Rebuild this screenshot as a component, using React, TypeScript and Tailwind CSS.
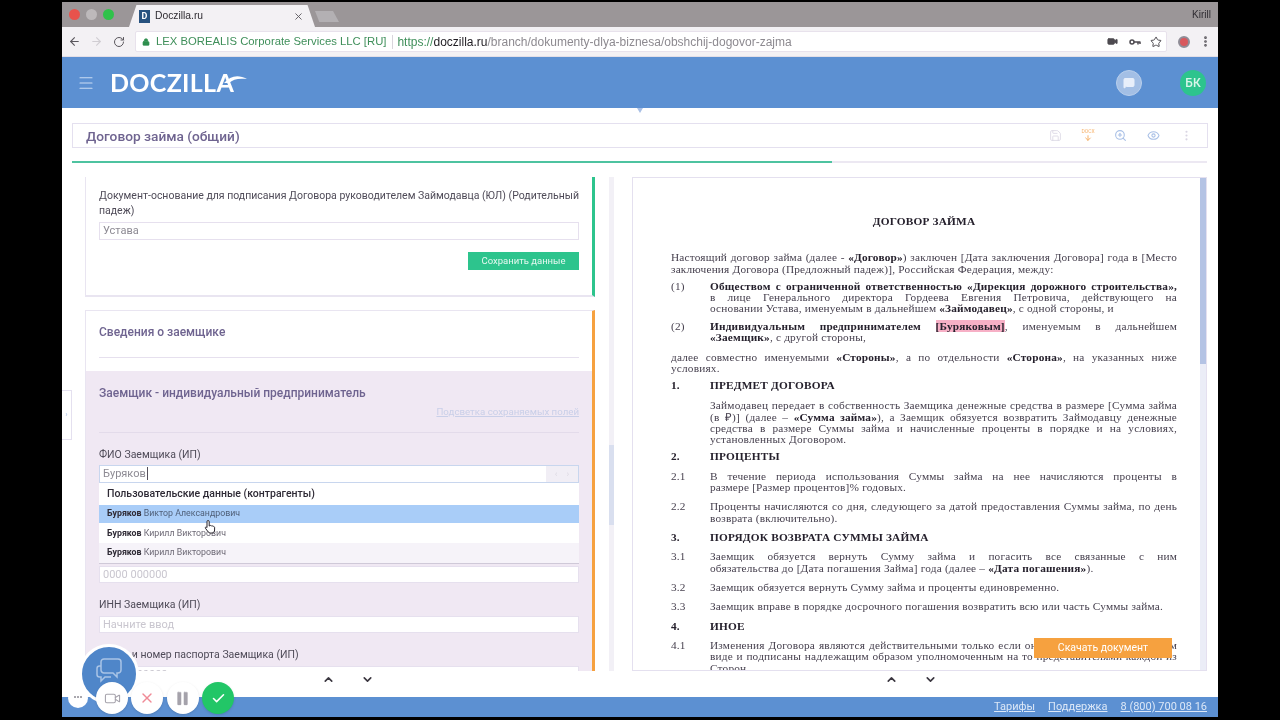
import type { ReactNode } from 'react';
import {
  ArrowDown,
  ArrowLeft,
  ArrowRight,
  Check,
  ChevronDown,
  ChevronUp,
  Eye,
  Lock,
  Menu,
  MessageSquare,
  MoreVertical,
  Pause,
  RotateCw,
  Save,
  Star,
  Video,
  X,
  ZoomIn,
} from 'lucide-react';

function Line({ children, just }: { children: ReactNode; just?: boolean }) {
  return <div className={just ? 'whitespace-nowrap [text-align-last:justify]' : 'whitespace-nowrap'}>{children}</div>;
}

function Clause({ num, children, top, bold }: { num: string; children: ReactNode; top: string; bold?: boolean }) {
  return (
    <div className={`flex ${top}`}>
      <div className={`w-[39px] shrink-0 ${bold ? 'font-bold text-[#25202c]' : ''}`}>{num}</div>
      <div className={`flex-1 min-w-0 ${bold ? 'font-bold text-[#25202c]' : ''}`}>{children}</div>
    </div>
  );
}

function B({ children }: { children: ReactNode }) {
  return <b className="font-bold text-[#25202c]">{children}</b>;
}

function Doc() {
  return (
    <div className="relative w-[575px] h-[494px] shrink-0 overflow-hidden bg-white border border-[#e4e0ef] flex">
      <div className="flex-1 min-w-0 pl-[38px] pr-[23px] pt-[38px] font-['Liberation_Serif',serif] text-[11.3px] tracking-[0.19px] leading-[11.35px] text-[#47414f]">
        <div className="text-center font-bold text-[#25202c]">ДОГОВОР ЗАЙМА</div>
        <div className="mt-[25px]">
          <Line just>
            Настоящий договор займа (далее - <B>«Договор»</B>) заключен [Дата заключения Договора] года в [Место
          </Line>
          <Line>заключения Договора (Предложный падеж)], Российская Федерация, между:</Line>
        </div>
        <Clause num="(1)" top="mt-[5.5px]">
          <Line just>
            <B>Обществом с ограниченной ответственностью «Дирекция дорожного строительства»,</B>
          </Line>
          <Line just>в лице Генерального директора Гордеева Евгения Петровича, действующего на</Line>
          <Line>
            основании Устава, именуемым в дальнейшем <B>«Займодавец»</B>, с одной стороны, и
          </Line>
        </Clause>
        <Clause num="(2)" top="mt-[6.5px]">
          <Line just>
            <B>Индивидуальным предпринимателем</B> <B><span className="bg-[#f7b0c6]">[Буряковым]</span></B>, именуемым в дальнейшем
          </Line>
          <Line>
            <B>«Заемщик»</B>, с другой стороны,
          </Line>
        </Clause>
        <div className="mt-[8px]">
          <Line just>
            далее совместно именуемыми <B>«Стороны»</B>, а по отдельности <B>«Сторона»</B>, на указанных ниже
          </Line>
          <Line>условиях.</Line>
        </div>
        <Clause num="1." top="mt-[5.5px]" bold>
          ПРЕДМЕТ ДОГОВОРА
        </Clause>
        <div className="pl-[39px] mt-[9px]">
          <Line just>Займодавец передает в собственность Заемщика денежные средства в размере [Сумма займа</Line>
          <Line just>
            (в ₽)] (далее – <B>«Сумма займа»</B>), а Заемщик обязуется возвратить Займодавцу денежные
          </Line>
          <Line just>средства в размере Суммы займа и начисленные проценты в порядке и на условиях,</Line>
          <Line>установленных Договором.</Line>
        </div>
        <Clause num="2." top="mt-[5.5px]" bold>
          ПРОЦЕНТЫ
        </Clause>
        <Clause num="2.1" top="mt-[8px]">
          <Line just>В течение периода использования Суммы займа на нее начисляются проценты в</Line>
          <Line>размере [Размер процентов]% годовых.</Line>
        </Clause>
        <Clause num="2.2" top="mt-[8px]">
          <Line just>Проценты начисляются со дня, следующего за датой предоставления Суммы займа, по день</Line>
          <Line>возврата (включительно).</Line>
        </Clause>
        <Clause num="3." top="mt-[8.5px]" bold>
          ПОРЯДОК ВОЗВРАТА СУММЫ ЗАЙМА
        </Clause>
        <Clause num="3.1" top="mt-[7.5px]">
          <Line just>Заемщик обязуется вернуть Сумму займа и погасить все связанные с ним</Line>
          <Line>
            обязательства до [Дата погашения Займа] года (далее – <B>«Дата погашения»</B>).
          </Line>
        </Clause>
        <Clause num="3.2" top="mt-[8px]">
          <Line>Заемщик обязуется вернуть Сумму займа и проценты единовременно.</Line>
        </Clause>
        <Clause num="3.3" top="mt-[8px]">
          <Line>Заемщик вправе в порядке досрочного погашения возвратить всю или часть Суммы займа.</Line>
        </Clause>
        <Clause num="4." top="mt-[8px]" bold>
          ИНОЕ
        </Clause>
        <Clause num="4.1" top="mt-[8px]">
          <Line just>Изменения Договора являются действительными только если они совершены в письменном</Line>
          <Line just>виде и подписаны надлежащим образом уполномоченным на то представителями каждой из</Line>
          <Line>Сторон.</Line>
        </Clause>
      </div>
      <div className="w-[6px] shrink-0 bg-[#ebedf7]">
        <div className="h-[186px] bg-[#b4c3e4]" />
      </div>
      <div className="absolute left-[401px] top-[460px] w-[138px] h-[20px] bg-[#f6a13f] text-white font-['Roboto',sans-serif] text-[10.5px] leading-[20px] text-center">
        Скачать документ
      </div>
    </div>
  );
}

function Field({ label, value }: { label: string; value: string }) {
  return (
    <div className="mt-[15px]">
      <div className="text-[10.5px] leading-[14px] text-[#4f4b58]">{label}</div>
      <div className="mt-[4px] h-[17px] bg-white border border-[#e6e0ee] px-[3px] text-[11px] leading-[15px] text-[#c9c6cf]">
        {value}
      </div>
    </div>
  );
}

function FormPane() {
  return (
    <div className="relative w-[510px] h-[494px] shrink-0 overflow-hidden font-['Roboto',sans-serif]">
      <div className="h-[120px] bg-white border-b-2 border-l border-[#e9e5f1] border-r-[3px] border-r-[#2dc48d] pl-[13px] pr-[13px] pt-[11px]">
        <div className="text-[10.5px] leading-[15px] text-[#4f4b58] whitespace-nowrap">
          <div>Документ-основание для подписания Договора руководителем Займодавца (ЮЛ) (Родительный</div>
          <div>падеж)</div>
        </div>
        <div className="mt-[4px] h-[18px] border border-[#e6e0ee] px-[3px] text-[11px] leading-[16px] text-[#8d8a93]">
          Устава
        </div>
        <div className="mt-[12px] flex justify-end">
          <div className="w-[111px] h-[18px] bg-[#2dc48d] text-[#e6f8f1] text-[9.5px] leading-[18px] text-center">
            Сохранить данные
          </div>
        </div>
      </div>

      <div className="mt-[13px] bg-white border-t border-l border-[#e9e5f1] border-r-[3px] border-r-[#f6a13f]">
        <div className="h-[60px] px-[13px] pt-[14px]">
          <div className="text-[12px] leading-[14px] font-medium text-[#6f6490]">Сведения о заемщике</div>
          <div className="mt-[18px] h-px bg-[#e6e0ee]" />
        </div>
        <div className="h-[320px] bg-[#f0e8f3] px-[13px] pt-[15px]">
          <div className="text-[12px] leading-[14px] font-medium text-[#6f6490]">
            Заемщик - индивидуальный предприниматель
          </div>
          <div className="mt-[5px] text-right text-[9.7px] leading-[14px] text-[#c9cfe8] underline">
            Подсветка сохраняемых полей
          </div>
          <div className="mt-[13px] h-px bg-[#e3dbea]" />
          <div className="mt-[15px] text-[10.5px] leading-[14px] text-[#4f4b58]">ФИО Заемщика (ИП)</div>
          <div className="mt-[3px] h-[18px] bg-white border border-[#c8d6ee] pl-[3px] text-[11px] leading-[16px] text-[#8d8a93] flex">
            <span className="border-r border-[#55505c] pr-px h-[13px] mt-px leading-[13px]">Буряков</span>
            <div className="ml-auto w-[32px] bg-[#f1eef5] flex items-center justify-center gap-[9px] text-[#dcd9e2]">
              <span className="text-[9px]">‹</span>
              <span className="text-[9px]">›</span>
            </div>
          </div>
          <div className="mt-[83px] h-[17px] bg-white border border-[#e6e0ee] px-[3px] text-[11px] leading-[15px] text-[#c9c6cf]">
            0000 000000
          </div>
          <Field label="ИНН Заемщика (ИП)" value="Начните ввод" />
          <Field label="Серия и номер паспорта Заемщика (ИП)" value="0000 000000" />
        </div>
      </div>

      <div className="absolute left-[14px] top-[306px] w-[480px] h-[81px] bg-white border-b border-[#cfc9d8]">
        <div className="h-[22px] pl-[8px] text-[10.5px] leading-[22px] font-medium text-[#2e2a35]">
          Пользовательские данные (контрагенты)
        </div>
        <div className="h-[18px] bg-[#a9cdf8] pl-[8px] text-[8.8px] leading-[17px] text-[#4f5f78]">
          <b className="text-[#2e2a35]">Буряков</b> Виктор Александрович
        </div>
        <div className="h-[20px] pl-[8px] text-[8.8px] leading-[20px] text-[#6d6975]">
          <b className="text-[#2e2a35]">Буряков</b> Кирилл Викторович
        </div>
        <div className="h-[20px] bg-[#f6f3f9] pl-[8px] text-[8.8px] leading-[19px] text-[#6d6975]">
          <b className="text-[#2e2a35]">Буряков</b> Кирилл Викторович
        </div>
      </div>

      <svg className="absolute left-[119px] top-[342px]" width="13" height="15" viewBox="0 0 13 15">
        <path
          d="M4 1.5c.8 0 1.2.5 1.2 1.2V7l.6-.2c.5-.5 1.4-.4 1.7.2.6-.3 1.3-.1 1.6.4.6-.2 1.4.2 1.5 1v2.6c0 1.7-1.1 3-2.8 3H6.4c-1 0-1.7-.4-2.3-1.2L1.4 9.2c-.4-.6.3-1.5 1-1.1l.6.5V2.7c0-.7.3-1.2 1-1.2z"
          fill="#fff"
          stroke="#26222a"
          strokeWidth="1"
        />
      </svg>
    </div>
  );
}

function ArrowPair({ className }: { className: string }) {
  return (
    <div className={`flex items-center gap-[26px] text-[#3b3740] ${className}`}>
      <ChevronUp size={13} strokeWidth={3} />
      <ChevronDown size={13} strokeWidth={3} />
    </div>
  );
}

export default function App() {
  return (
    <div className="relative w-[1280px] h-[720px] overflow-hidden bg-black font-['Roboto',sans-serif] blur-[0.4px]">
      <div className="ml-[62px] w-[1156px] h-[720px] pt-[2px] pb-[3px] flex flex-col bg-black">
        {/* browser tab strip */}
        <div className="relative h-[25px] shrink-0 bg-[#9b9698] flex items-end">
          <div className="ml-[7px] self-center flex gap-[6px]">
            <span className="w-[11px] h-[11px] rounded-full bg-[#e8524c]" />
            <span className="w-[11px] h-[11px] rounded-full bg-[#bdb9bb]" />
            <span className="w-[11px] h-[11px] rounded-full bg-[#2fc24a]" />
          </div>
          <div className="ml-[15px] w-[186px] h-[22px] bg-[#f3f1f4] [clip-path:polygon(4%_0,96%_0,100%_100%,0_100%)] flex items-center pl-[10px] pr-[11px]">
            <span className="w-[11px] h-[13px] bg-[#27527f] text-white text-[9px] font-bold leading-[13px] text-center">D</span>
            <span className="ml-[5px] text-[10.3px] font-['Liberation_Sans',sans-serif] text-[#2e2b31]">Doczilla.ru</span>
            <X className="ml-auto text-[#5d5a60]" size={11} strokeWidth={2} />
          </div>
          <div className="mb-[5px] w-[24px] h-[11px] bg-[#b3b0b3] [clip-path:polygon(0_0,75%_0,100%_100%,18%_100%)]" />
          <span className="ml-auto self-center mr-[7px] text-[10px] font-['Liberation_Sans',sans-serif] text-[#2e2b31]">Kirill</span>
        </div>

        {/* address bar */}
        <div className="h-[30px] shrink-0 bg-[#f3f1f4] flex items-center border-b border-[#e3dfe7]">
          <ArrowLeft className="ml-[6px] text-[#5a575d]" size={13} strokeWidth={2} />
          <ArrowRight className="ml-[9px] text-[#d0cdd2]" size={13} strokeWidth={2} />
          <RotateCw className="ml-[10px] text-[#5a575d]" size={12} strokeWidth={2} />
          <div className="ml-[10px] w-[1032px] h-[21px] bg-white border border-[#e8e2ec] rounded-[2px] flex items-center pl-[4px] font-['Liberation_Sans',sans-serif]">
            <Lock className="ml-[2px] text-[#2f8f4e]" size={8} fill="#2f8f4e" strokeWidth={2} />
            <span className="ml-[6px] text-[11.3px] text-[#3f8f5a] whitespace-nowrap">LEX BOREALIS Corporate Services LLC [RU]</span>
            <span className="ml-[6px] w-px h-[14px] bg-[#d9d5dc]" />
            <span className="ml-[4px] text-[12px] text-[#3f8f5a]">https://</span>
            <span className="text-[12px] text-[#1f1c22]">doczilla.ru</span>
            <span className="text-[12px] text-[#8d8a90] whitespace-nowrap">/branch/dokumenty-dlya-biznesa/obshchij-dogovor-zajma</span>
            <div className="ml-auto mr-[4px] flex items-center gap-[9px] text-[#4d4a50]">
              <Video className="mr-[2px]" size={11} fill="#4d4a50" strokeWidth={2} />
              <svg width="12" height="8" viewBox="0 0 12 8" fill="none" stroke="#4d4a50" strokeWidth="1.5">
                <circle cx="3" cy="4" r="2" />
                <path d="M5 4h6.5M9 4v2.5M11 4v2" />
              </svg>
              <Star size={12} strokeWidth={2} />
            </div>
          </div>
          <span className="ml-[11px] w-[12px] h-[12px] rounded-full bg-[#d8585d] border-2 border-[#8f8c96]" />
          <MoreVertical className="ml-[9px] text-[#5a575d]" size={13} strokeWidth={3} />
        </div>

        {/* app header */}
        <div className="h-[51px] shrink-0 bg-[#5c90d2] flex items-center">
          <Menu className="ml-[15px] text-[#c9dcf3]" size={18} strokeWidth={1.5} />
          <div className="relative ml-[15px] text-white font-['Lato',sans-serif] font-bold text-[25px] tracking-[0.3px] leading-none">
            DOCZILLA
            <svg className="absolute left-[114px] top-[3px]" width="24" height="14" viewBox="0 0 24 14">
              <path d="M0 10C6 3 14 1 23 6 15 5 9 6 5 10z" fill="#fff" />
            </svg>
          </div>
          <div className="ml-auto flex items-center">
            <div className="w-[26px] h-[26px] rounded-full bg-[#a3bfe5] border border-[#b9cfec] flex items-center justify-center">
              <MessageSquare className="text-[#e8effa]" size={12} fill="#e8effa" />
            </div>
            <div className="ml-[38px] mr-[12px] w-[26px] h-[26px] rounded-full bg-[#2dc48d] text-[#d9f5ea] text-[12px] font-medium leading-[26px] text-center">
              БК
            </div>
          </div>
        </div>

        {/* page */}
        <div className="relative flex-1 min-h-0 bg-white flex flex-col px-[10px]">
          <div className="mt-[15px] h-[25px] shrink-0 border border-[#e4e0ef] flex items-center pl-[13px] pr-[14px]">
            <span className="pt-[1px] text-[13.7px] font-medium text-[#6f6490]">Договор займа (общий)</span>
            <div className="ml-auto flex items-center gap-[20px]">
              <Save className="text-[#d9d5e3]" size={13} strokeWidth={1.5} />
              <div className="w-[12px] flex flex-col items-center leading-none text-[#f6b26b]">
                <span className="text-[5px]">DOCX</span>
                <ArrowDown size={8} strokeWidth={3} />
              </div>
              <ZoomIn className="text-[#a9c0e6]" size={13} strokeWidth={2} />
              <Eye className="text-[#a9c0e6]" size={13} strokeWidth={2} />
              <MoreVertical className="text-[#d9d5e3]" size={13} strokeWidth={2} />
            </div>
          </div>

          <div className="mt-[13px] h-[2px] shrink-0 w-[1135px] bg-[#ece8f2]">
            <div className="h-[2px] w-[760px] bg-[#4ec3a0]" />
          </div>

          <div className="mt-[14px] flex pl-[13px] shrink-0">
            <FormPane />
            <div className="ml-[14px] w-[5px] h-[494px] shrink-0 bg-[#f2f0f6]">
              <div className="mt-[268px] h-[80px] bg-[#d9dfef]" />
            </div>
            <div className="ml-[18px]">
              <Doc />
            </div>
          </div>

          <div className="flex-1 flex items-start pt-[2px]">
            <ArrowPair className="ml-[250px]" />
            <ArrowPair className="ml-[511px]" />
          </div>
          <div className="absolute left-0 top-[282px] w-[10px] h-[50px] bg-white border-y border-r border-[#e4e0ef] flex items-center justify-center text-[8px] text-[#a9c0e6]">
            ›
          </div>
          <div className="absolute left-[575px] top-0 w-[6px] h-[5px] bg-[#a9c0e6] [clip-path:polygon(0_0,100%_0,50%_100%)]" />
        </div>

        {/* footer */}
        <div className="h-[20px] shrink-0 bg-[#5c90d2] flex items-center justify-end gap-[13px] pr-[11px] text-[11px] text-[#dbe7f7] underline">
          <span>Тарифы</span>
          <span>Поддержка</span>
          <span>8 (800) 700 08 16</span>
        </div>
      </div>

      {/* call widget */}
      <div className="absolute left-[79px] top-[644px] w-[60px] h-[60px] rounded-full bg-[#4f86c9] border-[3px] border-white flex items-center justify-center pb-[8px]">
        <svg width="28" height="26" viewBox="0 0 28 26" fill="none" stroke="#a9c4e6" strokeWidth="1.5">
          <path d="M6 9H4.500C3 9 2 10 2 11.500v6C2 19 3 20 4.500 20H6v4l4-4h6" />
          <path d="M9 2h14c1.600 0 3 1.200 3 3v8c0 1.600-1.400 3-3 3h-1v4l-4-4H9c-1.600 0-3-1.400-3-3V5c0-1.800 1.400-3 3-3z" />
        </svg>
      </div>
      <div className="absolute left-[68px] top-[688px] w-[20px] h-[20px] rounded-full bg-white text-[#8b8891] text-[9px] leading-[18px] text-center">
        •••
      </div>
      <div className="absolute left-[96px] top-[682px] flex gap-[3.4px]">
        <div className="w-[32px] h-[32px] rounded-full bg-white shadow flex items-center justify-center">
          <Video className="text-[#a5a2ab]" size={17} strokeWidth={1.5} />
        </div>
        <div className="w-[32px] h-[32px] rounded-full bg-white shadow flex items-center justify-center">
          <X className="text-[#f08a96]" size={16} strokeWidth={2} />
        </div>
        <div className="w-[32px] h-[32px] rounded-full bg-white shadow flex items-center justify-center">
          <Pause className="text-[#a5a2ab]" size={17} fill="#a5a2ab" strokeWidth={0.5} />
        </div>
        <div className="w-[32px] h-[32px] rounded-full bg-[#22c667] shadow flex items-center justify-center">
          <Check className="text-white" size={15} strokeWidth={2.5} />
        </div>
      </div>
    </div>
  );
}
